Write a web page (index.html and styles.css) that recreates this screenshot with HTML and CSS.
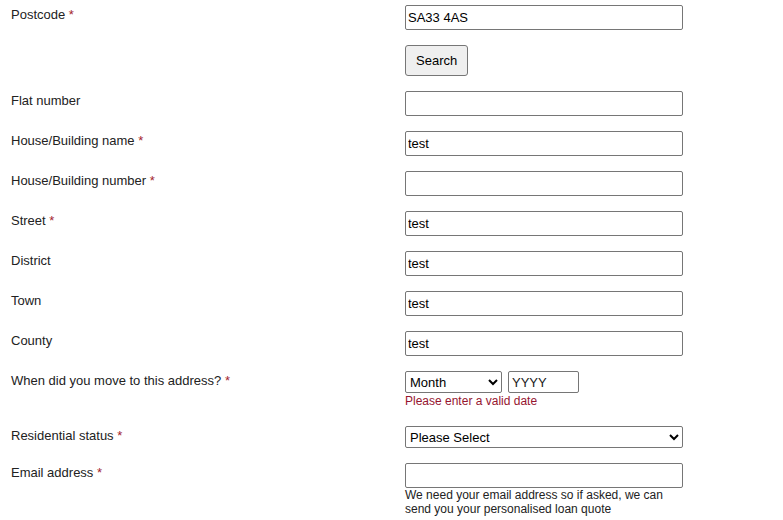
FILE: index.html
```html
<!DOCTYPE html>
<html lang="en">
<head>
<meta charset="utf-8">
<title>Address details</title>
<link rel="stylesheet" href="styles.css">
</head>
<body>
<form class="form">
  <div class="row">
    <label class="label" for="postcode">Postcode <span class="req">*</span></label>
    <div class="field">
      <input class="input" id="postcode" type="text" value="SA33 4AS">
      <button class="btn" type="button">Search</button>
    </div>
  </div>
  <div class="row">
    <label class="label" for="flat">Flat number</label>
    <div class="field"><input class="input" id="flat" type="text"></div>
  </div>
  <div class="row">
    <label class="label" for="hname">House/Building name <span class="req">*</span></label>
    <div class="field"><input class="input" id="hname" type="text" value="test"></div>
  </div>
  <div class="row">
    <label class="label" for="hnum">House/Building number <span class="req">*</span></label>
    <div class="field"><input class="input" id="hnum" type="text"></div>
  </div>
  <div class="row">
    <label class="label" for="street">Street <span class="req">*</span></label>
    <div class="field"><input class="input" id="street" type="text" value="test"></div>
  </div>
  <div class="row">
    <label class="label" for="district">District</label>
    <div class="field"><input class="input" id="district" type="text" value="test"></div>
  </div>
  <div class="row">
    <label class="label" for="town">Town</label>
    <div class="field"><input class="input" id="town" type="text" value="test"></div>
  </div>
  <div class="row">
    <label class="label" for="county">County</label>
    <div class="field"><input class="input" id="county" type="text" value="test"></div>
  </div>
  <div class="row">
    <label class="label" for="month">When did you move to this address? <span class="req">*</span></label>
    <div class="field">
      <div class="date">
        <select class="select month" id="month">
          <option>Month</option>
          <option>January</option>
          <option>February</option>
        </select>
        <input class="input year" type="text" placeholder="YYYY">
      </div>
      <div class="error">Please enter a valid date</div>
    </div>
  </div>
  <div class="row">
    <label class="label" for="status">Residential status <span class="req">*</span></label>
    <div class="field">
      <select class="select full" id="status">
        <option>Please Select</option>
        <option>Homeowner</option>
        <option>Tenant</option>
      </select>
    </div>
  </div>
  <div class="row">
    <label class="label label-email" for="email">Email address <span class="req">*</span></label>
    <div class="field">
      <input class="input" id="email" type="email">
      <p class="help">We need your email address so if asked, we can send you your personalised loan quote</p>
    </div>
  </div>
</form>
</body>
</html>
```
FILE: styles.css
```css
html, body {
  margin: 0;
  padding: 0;
  background: #fff;
}

body {
  font-family: "Liberation Sans", Arial, sans-serif;
  font-size: 13px;
  color: #222;
}

.form {
  padding: 5px 0 0 11px;
}

.row {
  display: grid;
  grid-template-columns: 394px 278px;
  margin-bottom: 15px;
}

.label {
  padding-top: 2px;
  line-height: 15px;
  color: #222;
}

.req {
  color: #a3242c;
}

.field {
  display: flex;
  flex-direction: column;
  align-items: flex-start;
}

.input {
  box-sizing: border-box;
  width: 278px;
  height: 25px;
  margin: 0;
  padding: 0 2px;
  border: 1px solid #767676;
  border-radius: 2px;
  font-family: "Liberation Sans", Arial, sans-serif;
  font-size: 13px;
  color: #000;
  background: #fff;
}

.input::placeholder {
  color: #222;
  opacity: 1;
}

.btn {
  box-sizing: border-box;
  margin-top: 15px;
  height: 31px;
  padding: 0 10px;
  border: 1px solid #767676;
  border-radius: 3px;
  background: #efefef;
  font-family: "Liberation Sans", Arial, sans-serif;
  font-size: 13px;
  color: #000;
}

.date {
  display: flex;
  gap: 6px;
}

.select {
  box-sizing: border-box;
  height: 22px;
  margin: 0;
  padding: 0;
  border: 1px solid #767676;
  border-radius: 2px;
  background: #fff;
  font-family: "Liberation Sans", Arial, sans-serif;
  font-size: 13px;
  color: #000;
}

.month {
  width: 97px;
}

.full {
  width: 278px;
}

.input.year {
  width: 71px;
  height: 22px;
  padding-left: 3px;
}

.error {
  margin: 1px 0 3px;
  font-size: 12px;
  line-height: 14px;
  color: #961530;
}

.help {
  margin: 0;
  font-size: 12px;
  line-height: 14px;
  color: #222;
}
```
